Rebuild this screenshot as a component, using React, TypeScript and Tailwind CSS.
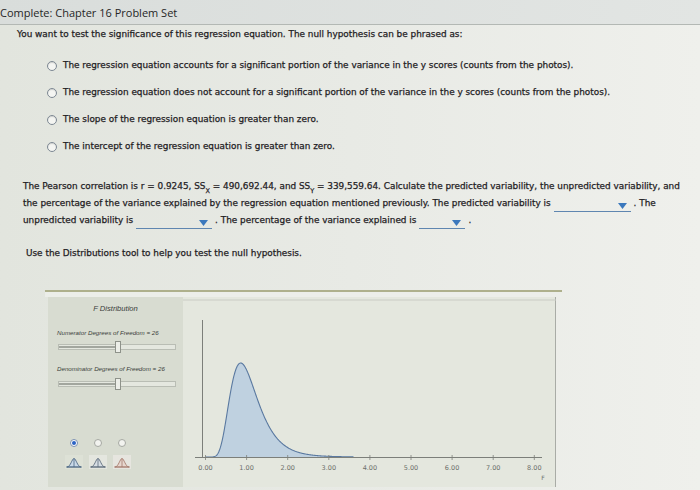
import React from 'react';

const body =
  "font-['DejaVu_Sans',sans-serif] text-[8.9px] text-[#1f2124] [-webkit-text-stroke:0.25px_#1f2124]";

function Radio() {
  return (
    <span className="inline-block w-[10px] h-[10px] rounded-full border border-[#7d8893] bg-[#f4f5f2] shadow-[inset_0_1px_1px_rgba(0,0,0,0.15)] [-webkit-text-stroke:0]" />
  );
}

function Blank({ w }: { w: number }) {
  return (
    <span
      className="inline-flex items-center justify-end border-b border-[#5f86b0] h-[11px] align-[-3px] mx-[3px] pr-[4px]"
      style={{ width: w }}
    >
      <svg width="9" height="6" viewBox="0 0 9 6">
        <path d="M0 0 L9 0 L4.5 6 Z" fill="#3b78bd" />
      </svg>
    </span>
  );
}

function Slider() {
  return (
    <div className="relative ml-[10px] w-[118px] h-[6px] border border-[#b9bdb4] bg-[#e4e7df]">
      <div className="absolute left-0 top-[1px] h-[2px] w-[58px] bg-[#a2a69e]" />
      <div className="absolute left-[56px] top-[-4px] w-[6px] h-[12px] border border-[#8e928a] bg-[#eceee8]" />
    </div>
  );
}

function BellIcon({ stroke, fill, bg }: { stroke: string; fill: string; bg: string }) {
  return (
    <div className={`w-[18px] h-[14px] flex items-center justify-center ${bg}`}>
      <svg width="16" height="11" viewBox="0 0 16 11">
        <path d="M1 10 C4.5 10 6 1.5 8 1.5 C10 1.5 11.5 10 15 10 Z" fill={fill} stroke={stroke} strokeWidth="0.9" />
        <path d="M8 1.5 L8 10 M0 10 L16 10" stroke={stroke} strokeWidth="0.8" />
      </svg>
    </div>
  );
}

function Chart() {
  const x0 = 22.5;
  const unit = 41.1;
  const axisY = 160;
  const mode = 12 / 14;
  const g = (x: number) => Math.pow(x, 12) * Math.pow(1 + x, -26);
  const gmax = g(mode);
  const pts: string[] = [];
  for (let i = 0; i <= 400; i++) {
    const x = (i / 400) * 3.6;
    const y = axisY - (g(x) / gmax) * 94;
    pts.push(`${(x0 + x * unit).toFixed(2)},${y.toFixed(2)}`);
  }
  const line = `M${pts.join(' L')}`;
  const area = `${line} L${(x0 + 3.6 * unit).toFixed(2)},${axisY} L${x0},${axisY} Z`;
  const labels = ['0.00', '1.00', '2.00', '3.00', '4.00', '5.00', '6.00', '7.00', '8.00'];

  return (
    <svg width="373" height="190" viewBox="0 0 373 190" className="block">
      <line x1="0" y1="3" x2="373" y2="3" stroke="#c9ccc4" strokeWidth="1" />
      <line x1="19.5" y1="23" x2="19.5" y2="161" stroke="#7c7f7a" strokeWidth="1" />
      <path d={area} fill="#b9cde0" fillOpacity="0.85" />
      <path d={line} fill="none" stroke="#5a79a0" strokeWidth="1.1" />
      <line x1="12" y1="160.5" x2="359" y2="160.5" stroke="#7c7f7a" strokeWidth="1" />
      {labels.map((l, i) => (
        <g key={l}>
          <line x1={x0 + i * unit} y1="158" x2={x0 + i * unit} y2="163" stroke="#7c7f7a" strokeWidth="0.8" />
          <text
            x={x0 + i * unit}
            y="173"
            textAnchor="middle"
            fontSize="6.5"
            fill="#6d706b"
            fontFamily="'DejaVu Sans', sans-serif"
          >
            {l}
          </text>
        </g>
      ))}
      <text x="360" y="183" textAnchor="middle" fontSize="6" fill="#6d706b" fontFamily="'DejaVu Sans', sans-serif">
        F
      </text>
    </svg>
  );
}

export default function App() {
  const options = [
    'The regression equation accounts for a significant portion of the variance in the y scores (counts from the photos).',
    'The regression equation does not account for a significant portion of the variance in the y scores (counts from the photos).',
    'The slope of the regression equation is greater than zero.',
    'The intercept of the regression equation is greater than zero.',
  ];

  return (
    <div className="w-[700px] h-[490px] overflow-hidden bg-gradient-to-r from-[#e2e5de] via-[#e8eae5] to-[#eff0ec]">
      {/* header */}
      <div className="h-[25px] border-b border-[#b3b8b4] bg-gradient-to-r from-[#d9dddb] to-[#e2e5e3] flex items-center">
        <span className="font-['Open_Sans',sans-serif] text-[11px] text-[#262626] leading-none">
          Complete: Chapter 16 Problem Set
        </span>
      </div>

      <div className={body}>
        <p className="ml-[17px] mt-[3px] leading-[12px]">
          You want to test the significance of this regression equation. The null hypothesis can be phrased as:
        </p>

        <div className="ml-[47px] mt-[12px]">
          {options.map((o) => (
            <div key={o} className="h-[27px] flex items-center gap-[6px]">
              <Radio />
              <span>{o}</span>
            </div>
          ))}
        </div>

        <p className="ml-[23px] mt-[18px] leading-[17px] whitespace-nowrap">
          The Pearson correlation is r = 0.9245, SS<sub className="text-[6.5px] leading-none align-[-2px]">X</sub> =
          490,692.44, and SS<sub className="text-[6.5px] leading-none align-[-2px]">Y</sub> = 339,559.64. Calculate the
          predicted variability, the unpredicted variability, and
          <br />
          the percentage of the variance explained by the regression equation mentioned previously. The predicted
          variability is
          <Blank w={77} />. The
          <br />
          unpredicted variability is
          <Blank w={76} />. The percentage of the variance explained is
          <Blank w={46} />.
        </p>

        <p className="ml-[26px] mt-[16px] leading-[17px]">Use the Distributions tool to help you test the null hypothesis.</p>
      </div>

      {/* distributions tool */}
      <div className="ml-[45px] mt-[28px] w-[517px] border-t-2 border-[#aeb08c]">
        <div className="h-[5px] bg-[#eceee9]" />
        <div className="ml-[3px] flex">
          <div className="w-[135px] h-[190px] bg-[#d8dcd1] flex flex-col font-['Liberation_Sans',sans-serif] italic text-[#3a3c3a]">
            <div className="mt-[8px] text-center text-[7.6px] leading-[8px]">F Distribution</div>
            <div className="mt-[16px] ml-[9px] text-[6.2px] leading-[7px]">Numerator Degrees of Freedom = 26</div>
            <div className="mt-[8px]">
              <Slider />
            </div>
            <div className="mt-[15px] ml-[9px] text-[6.2px] leading-[7px]">Denominator Degrees of Freedom = 26</div>
            <div className="mt-[9px]">
              <Slider />
            </div>
            <div className="mt-[52px] ml-[22px] flex gap-[16px]">
              <span className="w-[8px] h-[8px] rounded-full border border-[#7a8fb0] bg-white flex items-center justify-center">
                <span className="w-[4px] h-[4px] rounded-full bg-[#2a63c4]" />
              </span>
              <span className="w-[8px] h-[8px] rounded-full border border-[#a5a8a2] bg-[#f2f3ef]" />
              <span className="w-[8px] h-[8px] rounded-full border border-[#a5a8a2] bg-[#f2f3ef]" />
            </div>
            <div className="mt-[8px] ml-[17px] flex gap-[6px]">
              <BellIcon stroke="#4d6783" fill="#c9d9e8" bg="bg-[#dde1d6]" />
              <BellIcon stroke="#5b6a7a" fill="#d7dee4" bg="bg-[#e4e6df]" />
              <BellIcon stroke="#a57a6c" fill="#e7d7cf" bg="bg-[#e6e5df]" />
            </div>
          </div>
          <div className="w-[373px] h-[190px] bg-[#e4e7de] border-r border-[#a9aca6]">
            <Chart />
          </div>
        </div>
      </div>
    </div>
  );
}
